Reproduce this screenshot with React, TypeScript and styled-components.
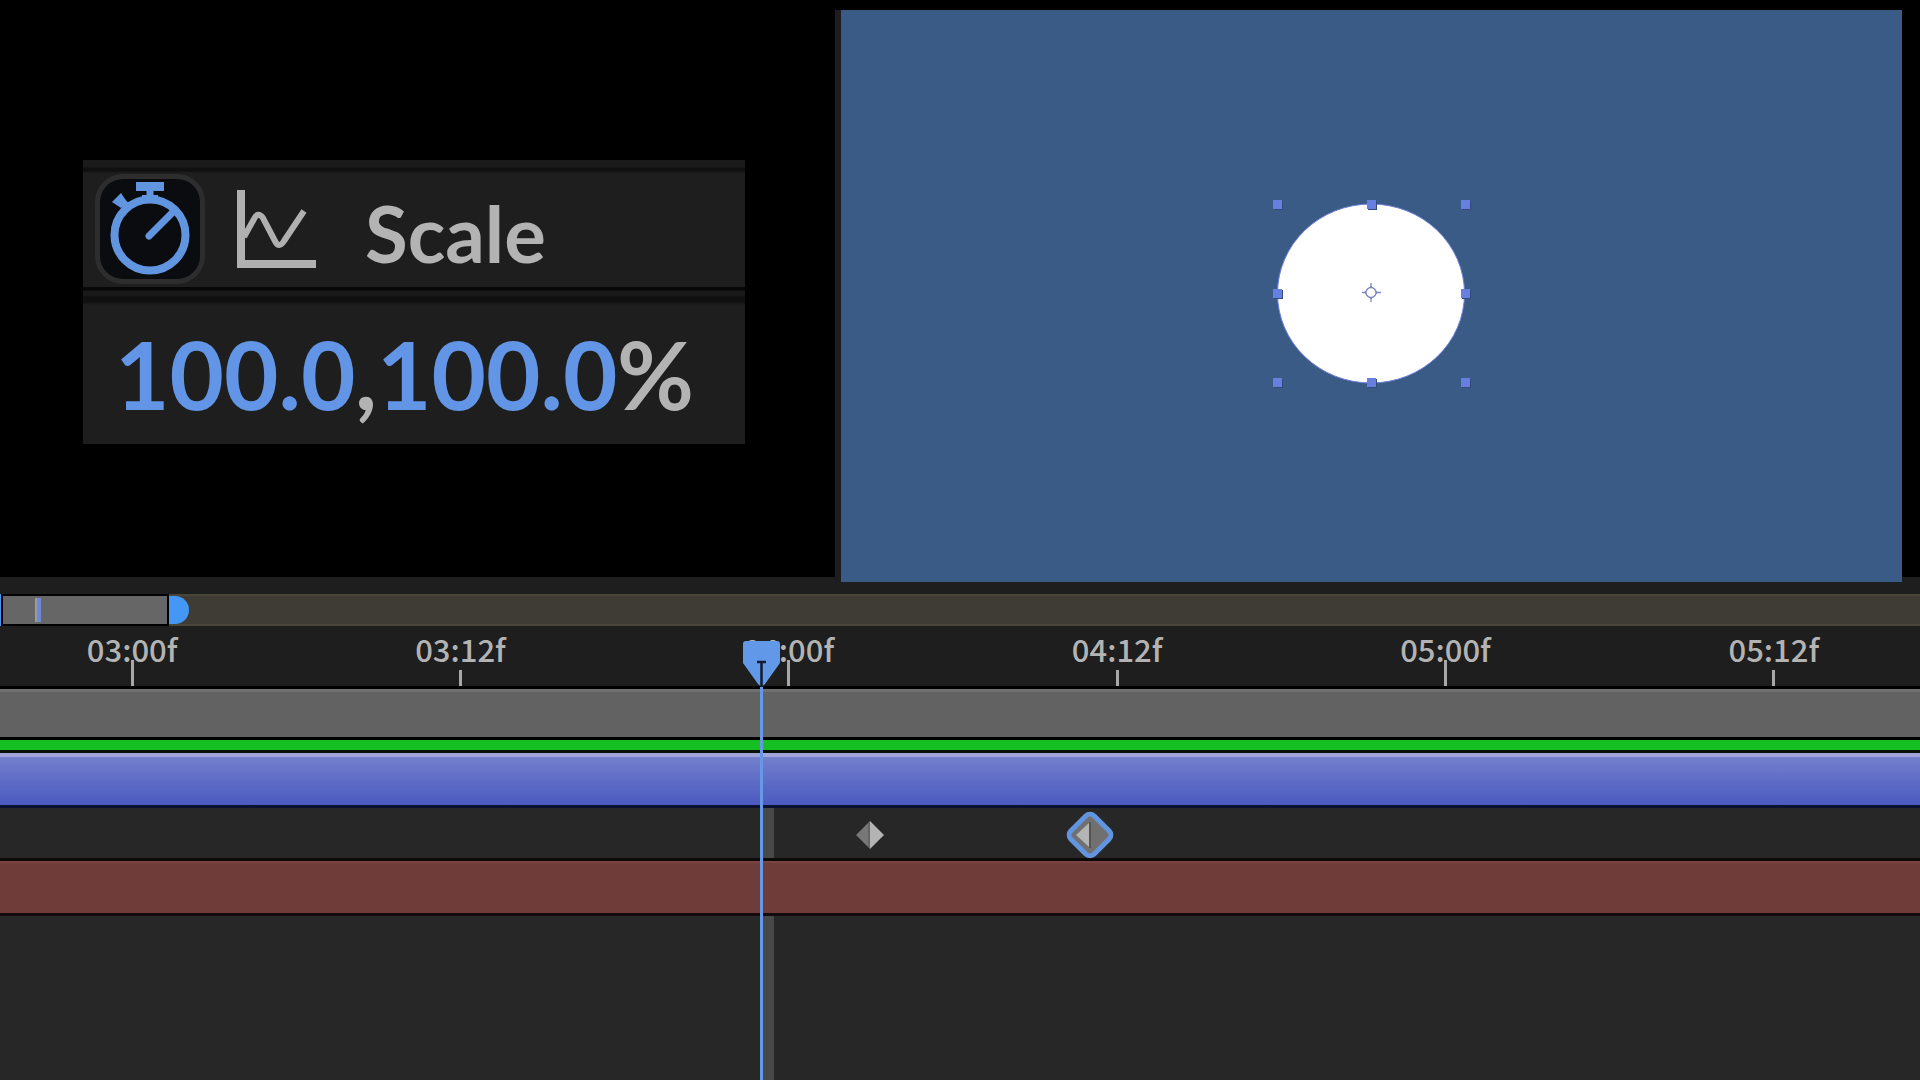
import React from "react";
import styled, { createGlobalStyle } from "styled-components";

const GlobalStyle = createGlobalStyle`
  *, *::before, *::after { box-sizing: border-box; }
  body { margin: 0; background: #000; }
  button, input { font: inherit; color: inherit; border: 0; padding: 0; background: none; }
`;

const Page = styled.main`
  min-height: 100vh;
  display: flex;
  flex-direction: column;
  overflow: hidden;
  background: #000;
  color: #b3b3b3;
  font-family: "Noto Sans CJK JP", "Noto Sans", sans-serif;
`;

const Stage = styled.section`
  display: grid;
  grid-template-columns: 835fr 1067fr 18px;
`;

const PropertyArea = styled.div`
  padding: 160px 90px 133px 83px;
  font-family: Lato, "Noto Sans", sans-serif;
  font-weight: 700;
`;

const PropertyHeader = styled.div`
  display: flex;
  align-items: center;
  height: 127px;
  padding: 10px 12px 0;
  background: linear-gradient(#1a1a1a 7px, #101010 8px, #101010 11px, #1e1e1e 13px);
`;

const StopwatchButton = styled.button`
  display: grid;
  place-items: center;
  width: 110px;
  height: 110px;
  border: 5px solid #2d2d2d;
  border-radius: 28px;
  background: #0b0c0f;
`;

const GraphButton = styled.button`
  display: grid;
  margin-left: 30px;
`;

const PropertyName = styled.span`
  margin-left: 48px;
  padding-top: 8px;
  font-size: 78px;
  line-height: 96px;
`;

const ValueRow = styled.div`
  display: flex;
  align-items: center;
  height: 157px;
  padding: 16px 0 0 32px;
  background: linear-gradient(#070707 3px, #191919 4px, #191919 8px, #101010 10px, #101010 15px, #1e1e1e 18px);
  font-size: 94px;
  line-height: 116px;
`;

const ValueInput = styled.input`
  width: 240px;
  height: 116px;
  color: #6295e6;
  outline: none;
`;

const Viewer = styled.div`
  display: grid;
  margin: 10px 0 -5px;
  border-left: 6px solid #1e1c1f;
  place-items: center;
  padding-bottom: 2px;
  background: #3a5b86;
  position: relative;
  z-index: 1;
`;

const Timeline = styled.section`
  position: relative;
  flex: 1;
  display: flex;
  flex-direction: column;
  padding-top: 17px;
  background: #1e1e1e;
`;

const Navigator = styled.div`
  display: flex;
  height: 32px;
  background: #3f3b35;
  border-top: 2px solid #4a453b;
  border-bottom: 2px solid #4a453b;
  & > * { margin: -2px 0; }
`;

const NavigatorStart = styled.div`
  width: 1px;
  background: #4597f5;
`;

const NavigatorRange = styled.div`
  width: 168px;
  padding: 2px 0 2px 32px;
  border: 2px solid #000;
  background: #666;
`;

const NavigatorMark = styled.div`
  width: 6px;
  height: 100%;
  border-left: 2px solid #9b9b9b;
  background: #6f87d4;
`;

const NavigatorEnd = styled.button`
  width: 20px;
  height: 28px;
  align-self: center;
  background: #4597f5;
  border-radius: 0 14px 14px 0;
`;

const Ruler = styled.div`
  display: grid;
  grid-template-columns: repeat(6, 1fr);
  height: 63px;
  margin: 0 -18px 0 -32px;
  border-bottom: 3px solid #000;
`;

const RulerMark = styled.div<{ $major: boolean }>`
  display: flex;
  flex-direction: column;
  align-items: center;
  justify-content: space-between;
  padding-top: 3px;
  font-size: 31px;
  font-weight: 500;
  line-height: 40px;
  &::after {
    content: "";
    width: 3px;
    flex: none;
    height: ${(p) => (p.$major ? 26 : 16)}px;
    margin-top: -10px;
    background: #a8a8a8;
  }
`;

const WorkArea = styled.div`
  height: 51px;
  border-top: 3px solid #707070;
  border-bottom: 3px solid #000;
  background: #626262;
`;

const CacheBar = styled.div`
  height: 13px;
  border-bottom: 3px solid #071007;
  background: #15c022;
`;

const ShapeLayer = styled.div`
  height: 55px;
  border-top: 4px solid #a2a5d9;
  border-bottom: 3px solid #0b1230;
  background: linear-gradient(#7480cc, #5e6cc6 50%, #4c5ac0);
`;

const KeyframeTrack = styled.div`
  position: relative;
  height: 53px;
  border-bottom: 3px solid #0c0909;
  background: #272727;
`;

const Keyframe = styled.button<{ $at: number }>`
  position: absolute;
  z-index: 1;
  top: 27px;
  left: ${(p) => p.$at}%;
  display: grid;
  transform: translate(-50%, -50%);
`;

const SolidLayer = styled.div`
  height: 55px;
  border-top: 2px solid #784341;
  border-bottom: 3px solid #140c0c;
  background: #703c39;
`;

const EmptyTracks = styled.div`
  position: relative;
  flex: 1;
  min-height: 163px;
  background: #272727;
`;

const FrameSpan = styled.div`
  position: absolute;
  inset: 0 auto 0 39.7%;
  width: 12px;
  background: #484848;
`;

const Playhead = styled.div`
  position: absolute;
  z-index: 2;
  inset: 64px auto 0 39.64%;
  width: 37px;
  margin-left: -18px;
  display: flex;
  flex-direction: column;
  align-items: center;
  & > svg { flex: none; }
  &::after {
    content: "";
    flex: 1;
    width: 3px;
    background: #6599e8;
  }
`;

const marks = ["03:00f", "03:12f", "04:00f", "04:12f", "05:00f", "05:12f"];

const StopwatchIcon = () => (
  <svg width="100" height="100" viewBox="100 179 100 100" fill="none" stroke="#6295e0">
    <circle cx="150" cy="235" r="35.5" strokeWidth="8" />
    <path d="M136 186.500H164" strokeWidth="9" />
    <path d="M150 187V200" strokeWidth="7" />
    <path d="M142 197.500H158" strokeWidth="5" />
    <path d="M149 236L173 212" strokeWidth="7" strokeLinecap="round" />
    <path d="M112 202L121 193L127 202L121 208Z" fill="#6295e0" stroke="none" />
    <path d="M119 199L129 209" strokeWidth="8" />
  </svg>
);

const GraphIcon = () => (
  <svg width="82" height="82" viewBox="235 188 82 82" fill="none" stroke="#b0b0b0">
    <path d="M241 190V264H316" strokeWidth="8" />
    <path d="M244 237L254 219Q258 211 263 218L275 241Q279 249 284 241L304 211" strokeWidth="6" />
  </svg>
);

const handles = [
  [5, 5], [99, 5], [193, 5],
  [5, 94], [193, 94],
  [5, 183], [99, 183], [193, 183],
];

const SelectedEllipse = () => (
  <svg width="198" height="190" viewBox="0 0 198 190" role="img" aria-label="Ellipse">
    <ellipse cx="98" cy="93.500" rx="93.500" ry="89.500" fill="#fff" stroke="#6d7fdc" />
    <g fill="none" stroke="#8088bd" strokeWidth="1.300">
      <circle cx="98" cy="92.500" r="5" />
      <path d="M98 83V88M98 97V102M89 92.500H93M103 92.500H108" />
      <path d="M98 86L104.500 92.500L98 99L91.500 92.500Z" strokeWidth="1" />
    </g>
    {handles.map(([x, y]) => (
      <g key={`${x}-${y}`}>
        <rect x={x - 4} y={y - 4} width="9" height="9" fill="#354a7c" />
        <rect x={x - 5} y={y - 5} width="9" height="9" fill="#6780df" />
      </g>
    ))}
  </svg>
);

export default function App() {
  return (
    <>
      <GlobalStyle />
      <Page>
        <Stage>
          <PropertyArea>
            <PropertyHeader>
              <StopwatchButton aria-label="Toggle animation"><StopwatchIcon /></StopwatchButton>
              <GraphButton aria-label="Show graph"><GraphIcon /></GraphButton>
              <PropertyName>Scale</PropertyName>
            </PropertyHeader>
            <ValueRow>
              <ValueInput aria-label="Horizontal scale" defaultValue="100.0" />
              <span>,</span>
              <ValueInput aria-label="Vertical scale" defaultValue="100.0" />
              <span>%</span>
            </ValueRow>
          </PropertyArea>
          <Viewer><SelectedEllipse /></Viewer>
        </Stage>
        <Timeline>
          <Navigator>
            <NavigatorStart />
            <NavigatorRange><NavigatorMark /></NavigatorRange>
            <NavigatorEnd aria-label="Visible range end" />
          </Navigator>
          <Ruler>
            {marks.map((m, i) => (
              <RulerMark key={m} $major={i % 2 === 0}>{m}</RulerMark>
            ))}
          </Ruler>
          <WorkArea />
          <CacheBar />
          <ShapeLayer />
          <KeyframeTrack>
            <FrameSpan />
            <Keyframe $at={45.3} aria-label="Keyframe">
              <svg width="28" height="28" viewBox="0 0 28 28">
                <path d="M14 0L0 14L14 28Z" fill="#777" />
                <path d="M14 0L28 14L14 28Z" fill="#b4b4b4" />
                <path d="M13 1V27" stroke="#555" />
              </svg>
            </Keyframe>
            <Keyframe $at={56.77} aria-label="Selected keyframe">
              <svg width="50" height="50" viewBox="0 0 50 50">
                <rect x="8.500" y="8.500" width="33" height="33" rx="6" transform="rotate(45 25 25)" fill="#707070" stroke="#6295e0" strokeWidth="5" />
                <path d="M24 13L11 25L24 37Z" fill="#b4b4b4" />
                <path d="M25 12V38" stroke="#555" strokeWidth="2" />
              </svg>
            </Keyframe>
          </KeyframeTrack>
          <SolidLayer />
          <EmptyTracks><FrameSpan /></EmptyTracks>
          <Playhead>
            <svg width="37" height="46" viewBox="0 0 37 46">
              <path d="M3 0H34Q37 0 37 3V22L22 43Q18.500 47 15 43L0 22V3Q0 0 3 0Z" fill="#6199e8" />
              <path d="M14 21H23M18.500 21V46" stroke="#101c30" strokeWidth="2.500" />
            </svg>
          </Playhead>
        </Timeline>
      </Page>
    </>
  );
}
